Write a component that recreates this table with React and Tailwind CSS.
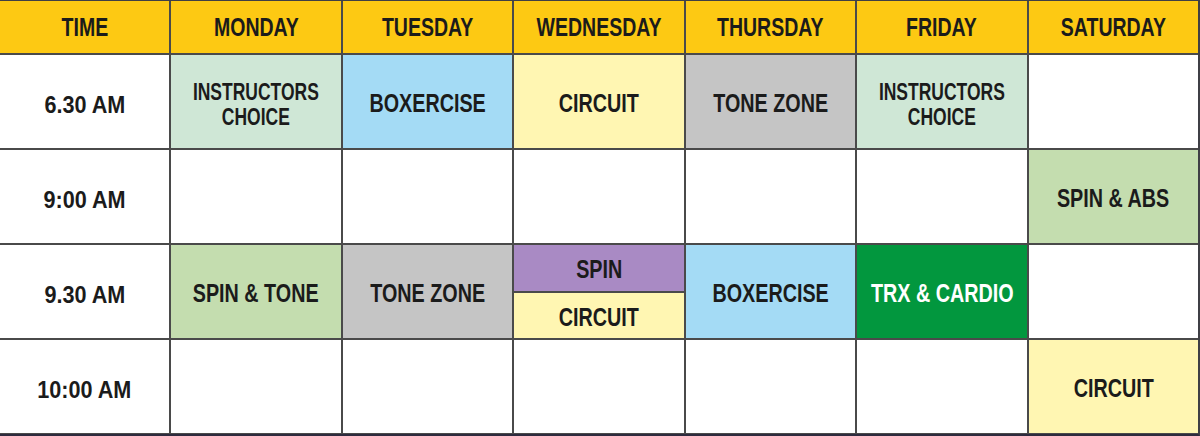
import React from "react";

const font = { fontFamily: '"Liberation Sans", Arial, sans-serif' };

const days = ["TIME", "MONDAY", "TUESDAY", "WEDNESDAY", "THURSDAY", "FRIDAY", "SATURDAY"];

const C = {
  ic: "bg-[#cfe7d6]",
  blue: "bg-[#a4dbf5]",
  yel: "bg-[#fff6b2]",
  gray: "bg-[#c5c5c5]",
  lg: "bg-[#c4ddaf]",
  white: "bg-white",
  dg: "bg-[#02973e] text-white",
};

const rows = [
  ["6.30 AM", [["INSTRUCTORS\nCHOICE", C.ic], ["BOXERCISE", C.blue], ["CIRCUIT", C.yel], ["TONE ZONE", C.gray], ["INSTRUCTORS\nCHOICE", C.ic], ["", C.white]]],
  ["9:00 AM", [["", C.white], ["", C.white], ["", C.white], ["", C.white], ["", C.white], ["SPIN & ABS", C.lg]]],
  ["9.30 AM", [["SPIN & TONE", C.lg], ["TONE ZONE", C.gray], ["SPLIT", ""], ["BOXERCISE", C.blue], ["TRX & CARDIO", C.dg], ["", C.white]]],
  ["10:00 AM", [["", C.white], ["", C.white], ["", C.white], ["", C.white], ["", C.white], ["CIRCUIT", C.yel]]],
];

function Label({ text }) {
  if (text.includes("\n")) {
    return (
      <span className="inline-block whitespace-pre text-center text-[23px] scale-x-[0.76] leading-[25px] translate-y-[3px]">{text}</span>
    );
  }
  return (
    <span className="inline-block whitespace-pre text-center text-[25px] scale-x-[0.79] leading-[25px] translate-y-[2px]">{text}</span>
  );
}

function Cell({ text, cls }) {
  return (
    <div className={`flex items-center justify-center text-center ${cls}`}>
      {text ? <Label text={text} /> : null}
    </div>
  );
}

export default function App() {
  return (
    <div className="w-[1200px] h-[436px] bg-white" style={font}>
      <div className="w-[1200px] h-[436px] bg-[#4a4a4a] border-t border-b-2 border-r-2 border-t-[#3f3f45] border-r-[#3f3f45] border-b-[#2e2b3e] grid grid-cols-7 grid-rows-[52px_93px_93px_93px_93px] gap-[2px] font-bold text-[#1b1b1b]">
        {days.map((d) => (
          <div key={d} className="bg-[#fdc913] flex items-center justify-center text-[25px]">
            <span className="inline-block whitespace-pre scale-x-[0.78] translate-y-[1px]">{d}</span>
          </div>
        ))}
        {rows.map(([t, cells]) => (
          <React.Fragment key={t}>
            <div className="bg-white flex items-center justify-center text-[24px]">
              <span className="inline-block whitespace-pre scale-x-[0.9] translate-y-[3px]">{t}</span>
            </div>
            {cells.map(([txt, cls], i) =>
              txt === "SPLIT" ? (
                <div key={i} className="grid grid-rows-[1fr_1fr] gap-[2px]">
                  <div className="bg-[#a98ac4] flex items-center justify-center">
                    <Label text="SPIN" />
                  </div>
                  <div className="bg-[#fff6b2] flex items-center justify-center">
                    <Label text="CIRCUIT" />
                  </div>
                </div>
              ) : (
                <Cell key={i} text={txt} cls={cls} />
              )
            )}
          </React.Fragment>
        ))}
      </div>
    </div>
  );
}
